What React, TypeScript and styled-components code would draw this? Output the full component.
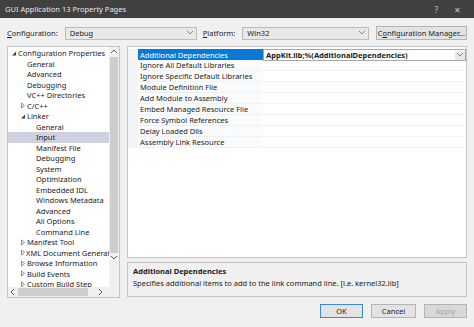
import React from 'react';
import styled, { createGlobalStyle } from 'styled-components';

const GlobalStyle = createGlobalStyle`
  html, body {
    margin: 0;
    padding: 0;
    background: #f0f0f0;
  }
  body {
    font-family: 'Noto Sans', 'Open Sans', sans-serif;
    font-size: 7.5px;
    color: #1b1b1b;
  }
`;

type TreeItem = {
  label: string;
  level: number;
  expander?: 'open' | 'closed';
  selected?: boolean;
};

const treeItems: TreeItem[] = [
  { label: 'Configuration Properties', level: 0, expander: 'open' },
  { label: 'General', level: 1 },
  { label: 'Advanced', level: 1 },
  { label: 'Debugging', level: 1 },
  { label: 'VC++ Directories', level: 1 },
  { label: 'C/C++', level: 1, expander: 'closed' },
  { label: 'Linker', level: 1, expander: 'open' },
  { label: 'General', level: 2 },
  { label: 'Input', level: 2, selected: true },
  { label: 'Manifest File', level: 2 },
  { label: 'Debugging', level: 2 },
  { label: 'System', level: 2 },
  { label: 'Optimization', level: 2 },
  { label: 'Embedded IDL', level: 2 },
  { label: 'Windows Metadata', level: 2 },
  { label: 'Advanced', level: 2 },
  { label: 'All Options', level: 2 },
  { label: 'Command Line', level: 2 },
  { label: 'Manifest Tool', level: 1, expander: 'closed' },
  { label: 'XML Document Generator', level: 1, expander: 'closed' },
  { label: 'Browse Information', level: 1, expander: 'closed' },
  { label: 'Build Events', level: 1, expander: 'closed' },
  { label: 'Custom Build Step', level: 1, expander: 'closed' },
];

const properties = [
  'Additional Dependencies',
  'Ignore All Default Libraries',
  'Ignore Specific Default Libraries',
  'Module Definition File',
  'Add Module to Assembly',
  'Embed Managed Resource File',
  'Force Symbol References',
  'Delay Loaded Dlls',
  'Assembly Link Resource',
];

function Chevron({ dir, color = '#7a7a7a' }: { dir: 'up' | 'down' | 'left' | 'right'; color?: string }) {
  const pts = {
    up: '1,5 4,2 7,5',
    down: '1,2 4,5 7,2',
    left: '5,1 2,4 5,7',
    right: '2,1 5,4 2,7',
  }[dir];
  return (
    <svg width="8" height="8" viewBox="0 0 8 8">
      <polyline points={pts} fill="none" stroke={color} strokeWidth="1" />
    </svg>
  );
}

function Expander({ kind }: { kind: 'open' | 'closed' }) {
  return (
    <svg width="6" height="7" viewBox="0 0 6 7">
      {kind === 'open' ? (
        <polygon points="5,1.5 5,5.5 1,5.5" fill="#404040" />
      ) : (
        <polygon points="1.5,1 4.5,3.5 1.5,6" fill="none" stroke="#707070" strokeWidth="0.8" />
      )}
    </svg>
  );
}

export default function App() {
  return (
    <Window>
      <GlobalStyle />
      <TitleBar>
        <span>GUI Application 13 Property Pages</span>
        <TitleButtons>
          <span>?</span>
          <span>✕</span>
        </TitleButtons>
      </TitleBar>
      <Body>
        <ConfigRow>
          <Label><u>C</u>onfiguration:</Label>
          <Combo $width={137}>
            <span>Debug</span>
            <Chevron dir="down" color="#8a8a8a" />
          </Combo>
          <Label $gap={6}><u>P</u>latform:</Label>
          <Combo $width={131}>
            <span>Win32</span>
            <Chevron dir="down" color="#8a8a8a" />
          </Combo>
          <Button $width={95} $gap={7}>
            C<u>o</u>nfiguration Manager...
          </Button>
        </ConfigRow>
        <Main>
          <TreePanel>
            <TreeTop>
              <TreeList>
                {treeItems.map((item, i) => (
                  <TreeRow key={i} $level={item.level} $selected={!!item.selected}>
                    <ExpanderSlot>{item.expander && <Expander kind={item.expander} />}</ExpanderSlot>
                    {item.label}
                  </TreeRow>
                ))}
              </TreeList>
              <VScroll>
                <ScrollArrow>
                  <Chevron dir="up" color="#606060" />
                </ScrollArrow>
                <VThumb />
                <ScrollArrow>
                  <Chevron dir="down" color="#606060" />
                </ScrollArrow>
              </VScroll>
            </TreeTop>
            <HScroll>
              <ScrollArrow>
                <Chevron dir="left" color="#606060" />
              </ScrollArrow>
              <HThumb />
              <ScrollArrow>
                <Chevron dir="right" color="#606060" />
              </ScrollArrow>
              <Corner />
            </HScroll>
          </TreePanel>
          <RightColumn>
            <Grid>
              {properties.map((name, i) => (
                <GridRow key={name}>
                  <Gutter />
                  <NameCell $selected={i === 0}>{name}</NameCell>
                  <ValueCell $active={i === 0}>
                    {i === 0 && (
                      <>
                        <strong>AppKit.lib;%(AdditionalDependencies)</strong>
                        <DropButton>
                          <Chevron dir="down" color="#8a8a8a" />
                        </DropButton>
                      </>
                    )}
                  </ValueCell>
                </GridRow>
              ))}
            </Grid>
            <Description>
              <strong>Additional Dependencies</strong>
              <span>Specifies additional items to add to the link command line. [i.e. kernel32.lib]</span>
            </Description>
          </RightColumn>
        </Main>
        <Footer>
          <Button $width={43} $focused>OK</Button>
          <Button $width={45} $gap={8}>Cancel</Button>
          <Button $width={43} $gap={8} $disabled>Apply</Button>
        </Footer>
      </Body>
    </Window>
  );
}

const Window = styled.div`
  width: 474px;
  height: 327px;
  display: flex;
  flex-direction: column;
  background: #f0f0f0;
  overflow: hidden;
`;

const TitleBar = styled.div`
  height: 18px;
  flex-shrink: 0;
  background: #404040;
  color: #e6e6e6;
  display: flex;
  align-items: center;
  justify-content: space-between;
  padding: 0 5px;
  font-size: 7.5px;
`;

const TitleButtons = styled.div`
  display: flex;
  gap: 16px;
  padding-right: 8px;
  color: #c8c8c8;
  font-size: 8px;
`;

const Body = styled.div`
  flex: 1;
  display: flex;
  flex-direction: column;
  padding: 8px 7px 0 7px;
`;

const ConfigRow = styled.div`
  display: flex;
  align-items: center;
  height: 14px;
`;

const Label = styled.span<{ $gap?: number }>`
  margin-left: ${(p) => p.$gap ?? 0}px;
  margin-right: 7px;
  white-space: nowrap;
`;

const Combo = styled.div<{ $width: number }>`
  width: ${(p) => p.$width}px;
  height: 13px;
  box-sizing: border-box;
  border: 1px solid #bcbcbc;
  background: #e8e8e8;
  display: flex;
  align-items: center;
  justify-content: space-between;
  padding: 0 2px 0 4px;
`;

const Button = styled.div<{ $width: number; $gap?: number; $focused?: boolean; $disabled?: boolean }>`
  width: ${(p) => p.$width}px;
  margin-left: ${(p) => p.$gap ?? 0}px;
  height: 14px;
  box-sizing: border-box;
  border: 1px solid ${(p) => (p.$focused ? '#3c8ad8' : '#b4b4b4')};
  background: ${(p) => (p.$disabled ? '#d9d9d9' : '#e3e3e3')};
  color: ${(p) => (p.$disabled ? '#a6a6a6' : '#1b1b1b')};
  display: flex;
  align-items: center;
  justify-content: center;
  white-space: nowrap;
`;

const Main = styled.div`
  display: grid;
  grid-template-columns: 113px 1fr;
  gap: 7px;
  margin-top: 6px;
  height: 252px;
`;

const TreePanel = styled.div`
  border: 1px solid #c4c4c4;
  background: #ffffff;
  display: flex;
  flex-direction: column;
  overflow: hidden;
`;

const TreeTop = styled.div`
  flex: 1;
  display: flex;
  min-height: 0;
`;

const TreeList = styled.div`
  flex: 1;
  padding-top: 1px;
  overflow: hidden;
`;

const TreeRow = styled.div<{ $level: number; $selected: boolean }>`
  height: 10.5px;
  display: flex;
  align-items: center;
  white-space: nowrap;
  padding-left: ${(p) => 3 + p.$level * 9}px;
  background: ${(p) => (p.$selected ? '#cfd1e0' : 'transparent')};
`;

const ExpanderSlot = styled.span`
  width: 7px;
  display: inline-flex;
  align-items: center;
`;

const VScroll = styled.div`
  width: 10px;
  background: #f0f0f0;
  display: flex;
  flex-direction: column;
  align-items: center;
`;

const ScrollArrow = styled.div`
  width: 10px;
  height: 10px;
  display: flex;
  align-items: center;
  justify-content: center;
  flex-shrink: 0;
`;

const VThumb = styled.div`
  width: 8px;
  height: 196px;
  background: #cdcdcd;
`;

const HScroll = styled.div`
  height: 10px;
  background: #f0f0f0;
  display: flex;
  align-items: center;
`;

const HThumb = styled.div`
  width: 70px;
  height: 8px;
  background: #cdcdcd;
  margin-right: 8px;
`;

const Corner = styled.div`
  margin-left: auto;
  width: 10px;
  height: 10px;
  background: #f0f0f0;
`;

const RightColumn = styled.div`
  display: flex;
  flex-direction: column;
  gap: 4px;
`;

const Grid = styled.div`
  height: 212px;
  box-sizing: border-box;
  border: 1px solid #c4c4c4;
  background: #ffffff;
  padding-top: 2px;
`;

const GridRow = styled.div`
  display: grid;
  grid-template-columns: 10px 125px 1fr;
  height: 11px;
`;

const Gutter = styled.div`
  background: #f3f4f8;
`;

const NameCell = styled.div<{ $selected: boolean }>`
  display: flex;
  align-items: center;
  padding-left: 2px;
  white-space: nowrap;
  overflow: hidden;
  background: ${(p) => (p.$selected ? '#0a78d6' : '#fafbfd')};
  color: ${(p) => (p.$selected ? '#ffffff' : '#1b1b1b')};
  border-bottom: 1px solid ${(p) => (p.$selected ? '#0a78d6' : '#f0f1f5')};
`;

const ValueCell = styled.div<{ $active: boolean }>`
  display: flex;
  align-items: center;
  justify-content: space-between;
  padding-left: 2px;
  box-sizing: border-box;
  border: 1px solid ${(p) => (p.$active ? '#a8a8a8' : 'transparent')};
  border-bottom-color: ${(p) => (p.$active ? '#a8a8a8' : '#f3f3f3')};
  strong {
    font-weight: 700;
    white-space: nowrap;
  }
`;

const DropButton = styled.div`
  width: 10px;
  height: 9px;
  background: #e8e8e8;
  display: flex;
  align-items: center;
  justify-content: center;
`;

const Description = styled.div`
  height: 35px;
  box-sizing: border-box;
  border: 1px solid #c4c4c4;
  padding: 3px 5px;
  display: flex;
  flex-direction: column;
  gap: 1px;
  line-height: 11px;
  strong {
    font-weight: 700;
  }
`;

const Footer = styled.div`
  display: flex;
  justify-content: flex-end;
  margin-top: 6px;
  padding-right: 0;
`;
